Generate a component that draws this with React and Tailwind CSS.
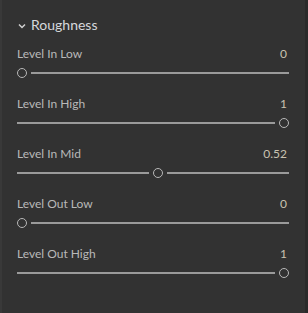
import React from "react";

const rows = [
  { label: "Level In Low", value: "0", f: 0 },
  { label: "Level In High", value: "1", f: 1 },
  { label: "Level In Mid", value: "0.52", f: 0.52 },
  { label: "Level Out Low", value: "0", f: 0 },
  { label: "Level Out High", value: "1", f: 1 },
];

function Slider({ f }) {
  return (
    <div className="flex h-[10px] items-center">
      {f > 0 && (
        <div className="h-[2px] bg-[#9a9a9a] mr-[4px]" style={{ flexGrow: f, flexBasis: 0 }} />
      )}
      <div className="w-[10px] h-[10px] shrink-0 rounded-full border-[1.5px] border-[#b8b8b8]" />
      {f < 1 && (
        <div className="h-[2px] bg-[#9a9a9a] ml-[4px]" style={{ flexGrow: 1 - f, flexBasis: 0 }} />
      )}
    </div>
  );
}

export default function App() {
  return (
    <div
      className="w-[308px] h-[313px] bg-[#323232] border-l-2 border-l-[#393939] border-r-[3px] border-r-[#2a2a2a] overflow-hidden"
      style={{ fontFamily: "Lato, 'Open Sans', sans-serif" }}
    >
      <div className="pt-[16px] pl-[15px] pr-[16px]">
        <div className="flex items-center h-[18px] gap-[5px] pl-[1px]">
          <svg width="8" height="6" viewBox="0 0 8 6" className="mt-[1px]">
            <path d="M1 1.5 L4 4.5 L7 1.5" fill="none" stroke="#d0d0d0" strokeWidth="1.5" />
          </svg>
          <span className="text-[14px] text-[#d6d8dc] leading-none">Roughness</span>
        </div>
        <div className="mt-[12px] flex flex-col">
          {rows.map((r) => (
            <div key={r.label} className="h-[50px]">
              <div className="flex justify-between items-center h-[16px] text-[12px] leading-none">
                <span className="text-[#b9b9b9]">{r.label}</span>
                <span className="text-[#c9c2b0] pr-[2px]">{r.value}</span>
              </div>
              <div className="mt-[6px]">
                <Slider f={r.f} />
              </div>
            </div>
          ))}
        </div>
      </div>
    </div>
  );
}
